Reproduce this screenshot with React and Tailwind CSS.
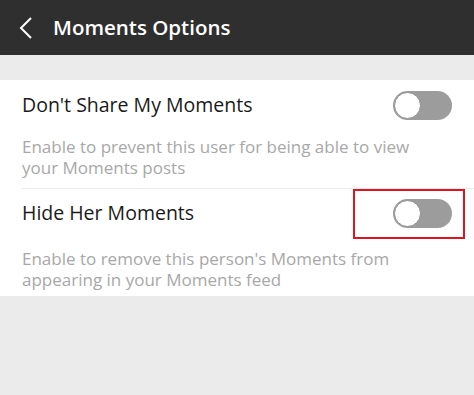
import React from "react";

function Toggle() {
  return (
    <div className="relative w-[59px] h-[29px] rounded-full bg-[#9c9c9c]">
      <div className="absolute left-[1px] top-[1px] w-[27px] h-[27px] rounded-full bg-white border-[1.5px] border-[#8f8f8f]" />
    </div>
  );
}

export default function App() {
  return (
    <div className="w-[474px] h-[395px] bg-[#ebebeb] flex flex-col" style={{ fontFamily: "'Open Sans', 'Noto Sans', sans-serif" }}>
      <div className="h-[55px] bg-[#2f2f2f] flex items-center shrink-0">
        <svg width="14" height="22" viewBox="0 0 14 22" className="ml-[19px]" fill="none" stroke="white" strokeWidth="2">
          <path d="M12 1 L2 11 L12 21" />
        </svg>
        <span className="ml-[20px] text-white text-[20.5px] font-semibold">Moments Options</span>
      </div>
      <div className="h-[25px] shrink-0" />
      <div className="bg-white h-[216px] flex flex-col pl-[22px]">
        <div className="flex items-center justify-between pr-[22px] h-[46px] mt-[2px]">
          <span className="text-[19.5px] text-[#1a1a1a]">Don't Share My Moments</span>
          <Toggle />
        </div>
        <div className="text-[17px] leading-[21px] text-[#a8a8a8] mt-[8px] pr-[34px]">
          Enable to prevent this user for being able to view your Moments posts
        </div>
        <div className="h-px bg-[#ececec] mt-[10px]" />
        <div className="relative flex items-center justify-between pr-[22px] h-[48px]">
          <span className="text-[19.5px] text-[#1a1a1a]">Hide Her Moments</span>
          <Toggle />
          <div className="absolute right-[9px] top-[0px] w-[112px] h-[50px] border-2 border-[#e0141e]" />
        </div>
        <div className="text-[17px] leading-[21px] text-[#a8a8a8] mt-[11px] pr-[34px]">
          Enable to remove this person's Moments from appearing in your Moments feed
        </div>
      </div>
    </div>
  );
}
